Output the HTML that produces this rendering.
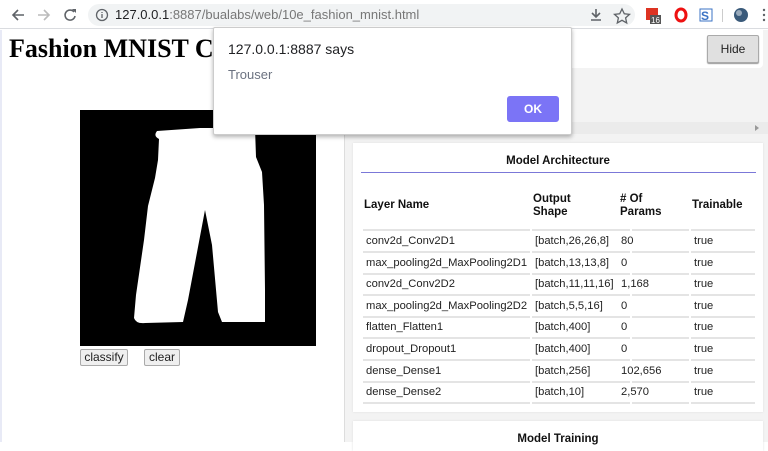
<!DOCTYPE html>
<html><head><meta charset="utf-8"><style>
*{margin:0;padding:0;box-sizing:border-box}
body{width:768px;height:442px;overflow:hidden;position:relative;background:#fff;font-family:"Liberation Sans",sans-serif}
.a{position:absolute}
.t{position:absolute;font-size:11.2px;color:#222;white-space:nowrap}
.h{position:absolute;font-size:11.5px;font-weight:bold;color:#111;line-height:13px}
.ln{position:absolute;height:2px;background:#e4e4e4}
</style></head><body>
<div class="a" style="left:0;top:0;width:768px;height:29px;background:#fff;border-bottom:1px solid #dadce0"></div>
<svg class="a" style="left:0;top:0" width="90" height="29">
<path d="M24 15H13M18 10l-5 5 5 5" stroke="#5f6368" stroke-width="1.6" fill="none"/>
<path d="M49 15H38M44 10l5 5-5 5" stroke="#bbb" stroke-width="1.6" fill="none"/>
<path d="M74 12a5 5 0 1 0 1 4" stroke="#5f6368" stroke-width="1.6" fill="none"/><path d="M72 9h4v4z" fill="#5f6368"/>
</svg>
<div class="a" style="left:88px;top:4px;width:547px;height:22px;background:#f1f3f4;border-radius:11px"></div>
<svg class="a" style="left:95px;top:8px" width="14" height="14"><circle cx="7" cy="7" r="5.5" stroke="#5f6368" stroke-width="1.3" fill="none"/><path d="M7 6v4M7 4v1" stroke="#5f6368" stroke-width="1.3"/></svg>
<div class="t" style="left:115px;top:7px;font-size:13px;color:#777">
<span style="color:#202124">127.0.0.1</span>:8887/bualabs/web/10e_fashion_mnist.html</div>
<svg class="a" style="left:588px;top:6px" width="180" height="20">
<path d="M8 3v7M4 7l4 4 4-4M3 14h10" stroke="#5f6368" stroke-width="1.6" fill="none"/>
<path d="M34 3l2.3 4.8 5.2.6-3.9 3.5 1.1 5.1-4.7-2.7-4.7 2.7 1.1-5.1-3.9-3.5 5.2-.6z" stroke="#5f6368" stroke-width="1.3" fill="none"/>
<rect x="58" y="2" width="12" height="12" fill="#d32"/><rect x="62" y="9" width="11" height="9" fill="#555"/>
<text x="63" y="17" font-size="8" fill="#fff" font-family="Liberation Sans">16</text>
<ellipse cx="93" cy="9" rx="5" ry="6" stroke="#e11" stroke-width="3" fill="none"/>
<rect x="112" y="3" width="12" height="12" fill="#fff" stroke="#3b73c4"/><text x="113" y="14" font-size="12" font-weight="bold" fill="#3b73c4" font-family="Liberation Sans">S</text>
<rect x="134" y="3" width="1" height="13" fill="#ccc"/>
<circle cx="153" cy="9" r="7" fill="#3a5a7a"/><circle cx="151" cy="7" r="3" fill="#9ab"/>
<circle cx="176" cy="4" r="1.2" fill="#5f6368"/><circle cx="176" cy="9" r="1.2" fill="#5f6368"/><circle cx="176" cy="14" r="1.2" fill="#5f6368"/>
</svg>
<div class="a" style="left:0;top:30px;width:2px;height:412px;background:#e8eaf6"></div>
<div class="a" style="left:9px;top:34px;font-family:'Liberation Serif',serif;font-weight:bold;font-size:26px;color:#000;white-space:nowrap">Fashion MNIST Classifier</div>
<div class="a" style="left:80px;top:110px;width:236px;height:236px;background:#000"></div>
<svg class="a" style="left:0;top:0" width="340" height="442">
<path d="M157 131Q153 136 159 139L158 160 155 178 148 206 144 240 136 295 134 318 Q136 324 145 323L183 322 188 300 205 210 212 245 218 312 222 322 265 322 265 290 264 205 262 172 256 157 255 128 200 128Z" fill="#fff"/>
</svg>
<div class="a" style="left:80px;top:349px;width:48px;height:17px;background:#efefef;border:1px solid #aaa;border-radius:2px;font-size:12px;text-align:center;line-height:15px;color:#222">classify</div>
<div class="a" style="left:144px;top:349px;width:36px;height:17px;background:#efefef;border:1px solid #aaa;border-radius:2px;font-size:12px;text-align:center;line-height:15px;color:#222">clear</div>
<div class="a" style="left:344px;top:30px;width:424px;height:412px;background:#f3f3f3;border-left:1px solid #ddd"></div>
<div class="a" style="left:345px;top:30px;width:418px;height:38px;background:#fff;border-radius:0 0 4px 0"></div>
<div class="a" style="left:707px;top:35px;width:52px;height:28px;background:#e0e0e0;border:1px solid #aaa;border-radius:2px;box-shadow:0 1px 1px #999;font-size:12px;text-align:center;line-height:26px;color:#222">Hide</div>
<div class="a" style="left:345px;top:122px;width:423px;height:12px;background:#ebebeb"></div>
<div class="a" style="left:755px;top:125px;width:0;height:0;border-left:4px solid #999;border-top:3px solid transparent;border-bottom:3px solid transparent"></div>
<div class="a" style="left:353px;top:143px;width:410px;height:269px;background:#fff;box-shadow:0 0 2px #ddd"></div>
<div class="a" style="left:353px;top:421px;width:410px;height:30px;background:#fff;box-shadow:0 0 2px #ddd"></div>
<div class="h" style="left:353px;top:155px;width:410px;text-align:center">Model Architecture</div>
<div class="h" style="left:353px;top:433px;width:410px;text-align:center">Model Training</div>
<div class="a" style="left:361px;top:172px;width:395px;height:1px;background:#7b78d8"></div>
<div class="h" style="left:364px;top:199px">Layer Name</div>
<div class="h" style="left:533px;top:193px">Output<br>Shape</div>
<div class="h" style="left:620px;top:193px"># Of<br>Params</div>
<div class="h" style="left:692px;top:199px">Trainable</div>
<div id="tb"></div>
<div class="a" style="left:213px;top:27px;width:359px;height:108px;background:#fff;border:1px solid #ccc;border-radius:2px;box-shadow:0 2px 4px rgba(0,0,0,.3)"></div>
<div class="t" style="left:228px;top:41px;font-size:14px;color:#202124">127.0.0.1:8887 says</div>
<div class="t" style="left:228px;top:67px;font-size:13px;color:#6b7280">Trouser</div>
<div class="a" style="left:507px;top:96px;width:52px;height:26px;background:#7b74f6;border-radius:3px;color:#fff;font-size:12px;font-weight:bold;text-align:center;line-height:26px">OK</div>
<script>
var r=[["conv2d_Conv2D1","[batch,26,26,8]","80"],["max_pooling2d_MaxPooling2D1","[batch,13,13,8]","0"],["conv2d_Conv2D2","[batch,11,11,16]","1,168"],["max_pooling2d_MaxPooling2D2","[batch,5,5,16]","0"],["flatten_Flatten1","[batch,400]","0"],["dropout_Dropout1","[batch,400]","0"],["dense_Dense1","[batch,256]","102,656"],["dense_Dense2","[batch,10]","2,570"]];
var h='',cols=[[363,167],[532,98],[632,57],[691,64]];
function lines(y){cols.forEach(function(c){h+='<div class="ln" style="left:'+c[0]+'px;top:'+y+'px;width:'+c[1]+'px"></div>'})}
lines(229);
r.forEach(function(x,i){var y=235+i*21.6;
h+='<div class="t" style="left:366px;top:'+y+'px">'+x[0]+'</div><div class="t" style="left:535px;top:'+y+'px">'+x[1]+'</div><div class="t" style="left:621px;top:'+y+'px">'+x[2]+'</div><div class="t" style="left:694px;top:'+y+'px">true</div>';
lines(Math.round(y+16));});
document.getElementById('tb').innerHTML=h;
</script>
</body></html>
